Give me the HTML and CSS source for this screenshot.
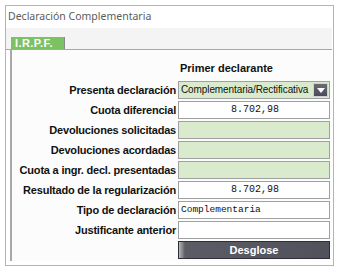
FILE: index.html
```html
<!DOCTYPE html>
<html lang="es">
<head>
  <meta charset="UTF-8">
  <title>Declaración Complementaria</title>
  <link rel="stylesheet" href="styles.css">
</head>
<body>

  <div class="ventana">
    <!-- Título -->
    <div class="titulo">Declaración Complementaria</div>

    <!-- Pestañas -->
    <div class="pestanas">
      <span class="pestana">I.R.P.F.</span>
    </div>

    <!-- Formulario -->
    <div class="panel">
      <div class="form">
        <div></div>
        <div class="col-titulo">Primer declarante</div>

        <label>Presenta declaración</label>
        <div class="campo verde select">
          <span>Complementaria/Rectificativa</span>
          <span class="flecha"></span>
        </div>

        <label>Cuota diferencial</label>
        <div class="campo num">8.702,98</div>

        <label>Devoluciones solicitadas</label>
        <div class="campo verde"></div>

        <label>Devoluciones acordadas</label>
        <div class="campo verde"></div>

        <label>Cuota a ingr. decl. presentadas</label>
        <div class="campo verde"></div>

        <label>Resultado de la regularización</label>
        <div class="campo num">8.702,98</div>

        <label>Tipo de declaración</label>
        <div class="campo mono">Complementaria</div>

        <label>Justificante anterior</label>
        <div class="campo"></div>

        <div></div>
        <button class="btn-desglose">Desglose</button>
      </div>
    </div>
  </div>

</body>
</html>
```

FILE: styles.css
```css
body {
  margin: 0;
  background-color: #ffffff;
  font-family: 'Liberation Sans', Arial, sans-serif;
}

/* Ventana */
.ventana {
  margin: 5px 0 0 5px;
  width: 327px;
  height: 259px;
  border: 1px solid #b4b4b4;
  display: flex;
  flex-direction: column;
}

.titulo {
  height: 22px;
  line-height: 20px;
  padding-left: 2px;
  font-family: 'Noto Sans', sans-serif;
  font-size: 10.5px;
  color: #5c5c5c;
}

/* Pestañas */
.pestanas {
  background-color: #f4f4f4;
  padding: 9px 0 0 5px;
  margin-right: 1px;
  display: flex;
  border-bottom: 1px solid #a6a6a6;
}

.pestana {
  width: 54px;
  height: 12px;
  line-height: 12px;
  background-color: #7cc262;
  border-right: 1px solid #8a8a8a;
  color: #ffffff;
  font-size: 11px;
  font-weight: bold;
  padding-left: 4px;
  box-sizing: border-box;
  letter-spacing: 0.4px;
}

/* Panel */
.panel {
  flex: 1;
  margin: 0 1px 4px 4px;
  border-left: 2px solid #a8a8a8;
  background-color: #fcfcfc;
}

.form {
  display: grid;
  grid-template-columns: 164px 152px;
  column-gap: 2px;
  row-gap: 2px;
  grid-auto-rows: 18px;
  padding-top: 11px;
}

.col-titulo {
  font-size: 11px;
  font-weight: bold;
  color: #111111;
  padding-left: 2px;
  line-height: 15px;
}

.form label {
  font-size: 11px;
  font-weight: bold;
  color: #111111;
  text-align: right;
  line-height: 18px;
  white-space: nowrap;
  letter-spacing: -0.2px;
}

/* Campos */
.campo {
  border: 1px solid #a0a0a0;
  background-color: #ffffff;
  box-sizing: border-box;
  font-size: 10px;
  line-height: 16px;
  color: #111111;
  padding-left: 2px;
}

.campo.verde {
  background-color: #d9ebcc;
}

.campo.num {
  font-family: 'Liberation Mono', monospace;
  font-size: 10px;
  text-align: center;
}

.campo.mono {
  font-family: 'Liberation Mono', monospace;
  font-size: 9.5px;
}

.select {
  display: flex;
  justify-content: space-between;
  align-items: center;
  letter-spacing: -0.1px;
  padding-right: 1px;
}

.flecha {
  width: 15px;
  height: 14px;
  box-sizing: border-box;
  border: 1px solid #d0d0d0;
  background: linear-gradient(#6a6a78, #4a4a58);
  position: relative;
}

.flecha::after {
  content: "";
  position: absolute;
  left: 3px;
  top: 4px;
  border-left: 4px solid transparent;
  border-right: 4px solid transparent;
  border-top: 5px solid #ffffff;
}

/* Botón Desglose */
.btn-desglose {
  border: 1px solid #2e2e36;
  background: linear-gradient(90deg, #b8b8b8 0, #5c5c66 6px, #51515c 100%);
  color: #ffffff;
  font-family: 'Liberation Sans', Arial, sans-serif;
  font-size: 11px;
  font-weight: bold;
  padding: 0;
  cursor: pointer;
}
```
